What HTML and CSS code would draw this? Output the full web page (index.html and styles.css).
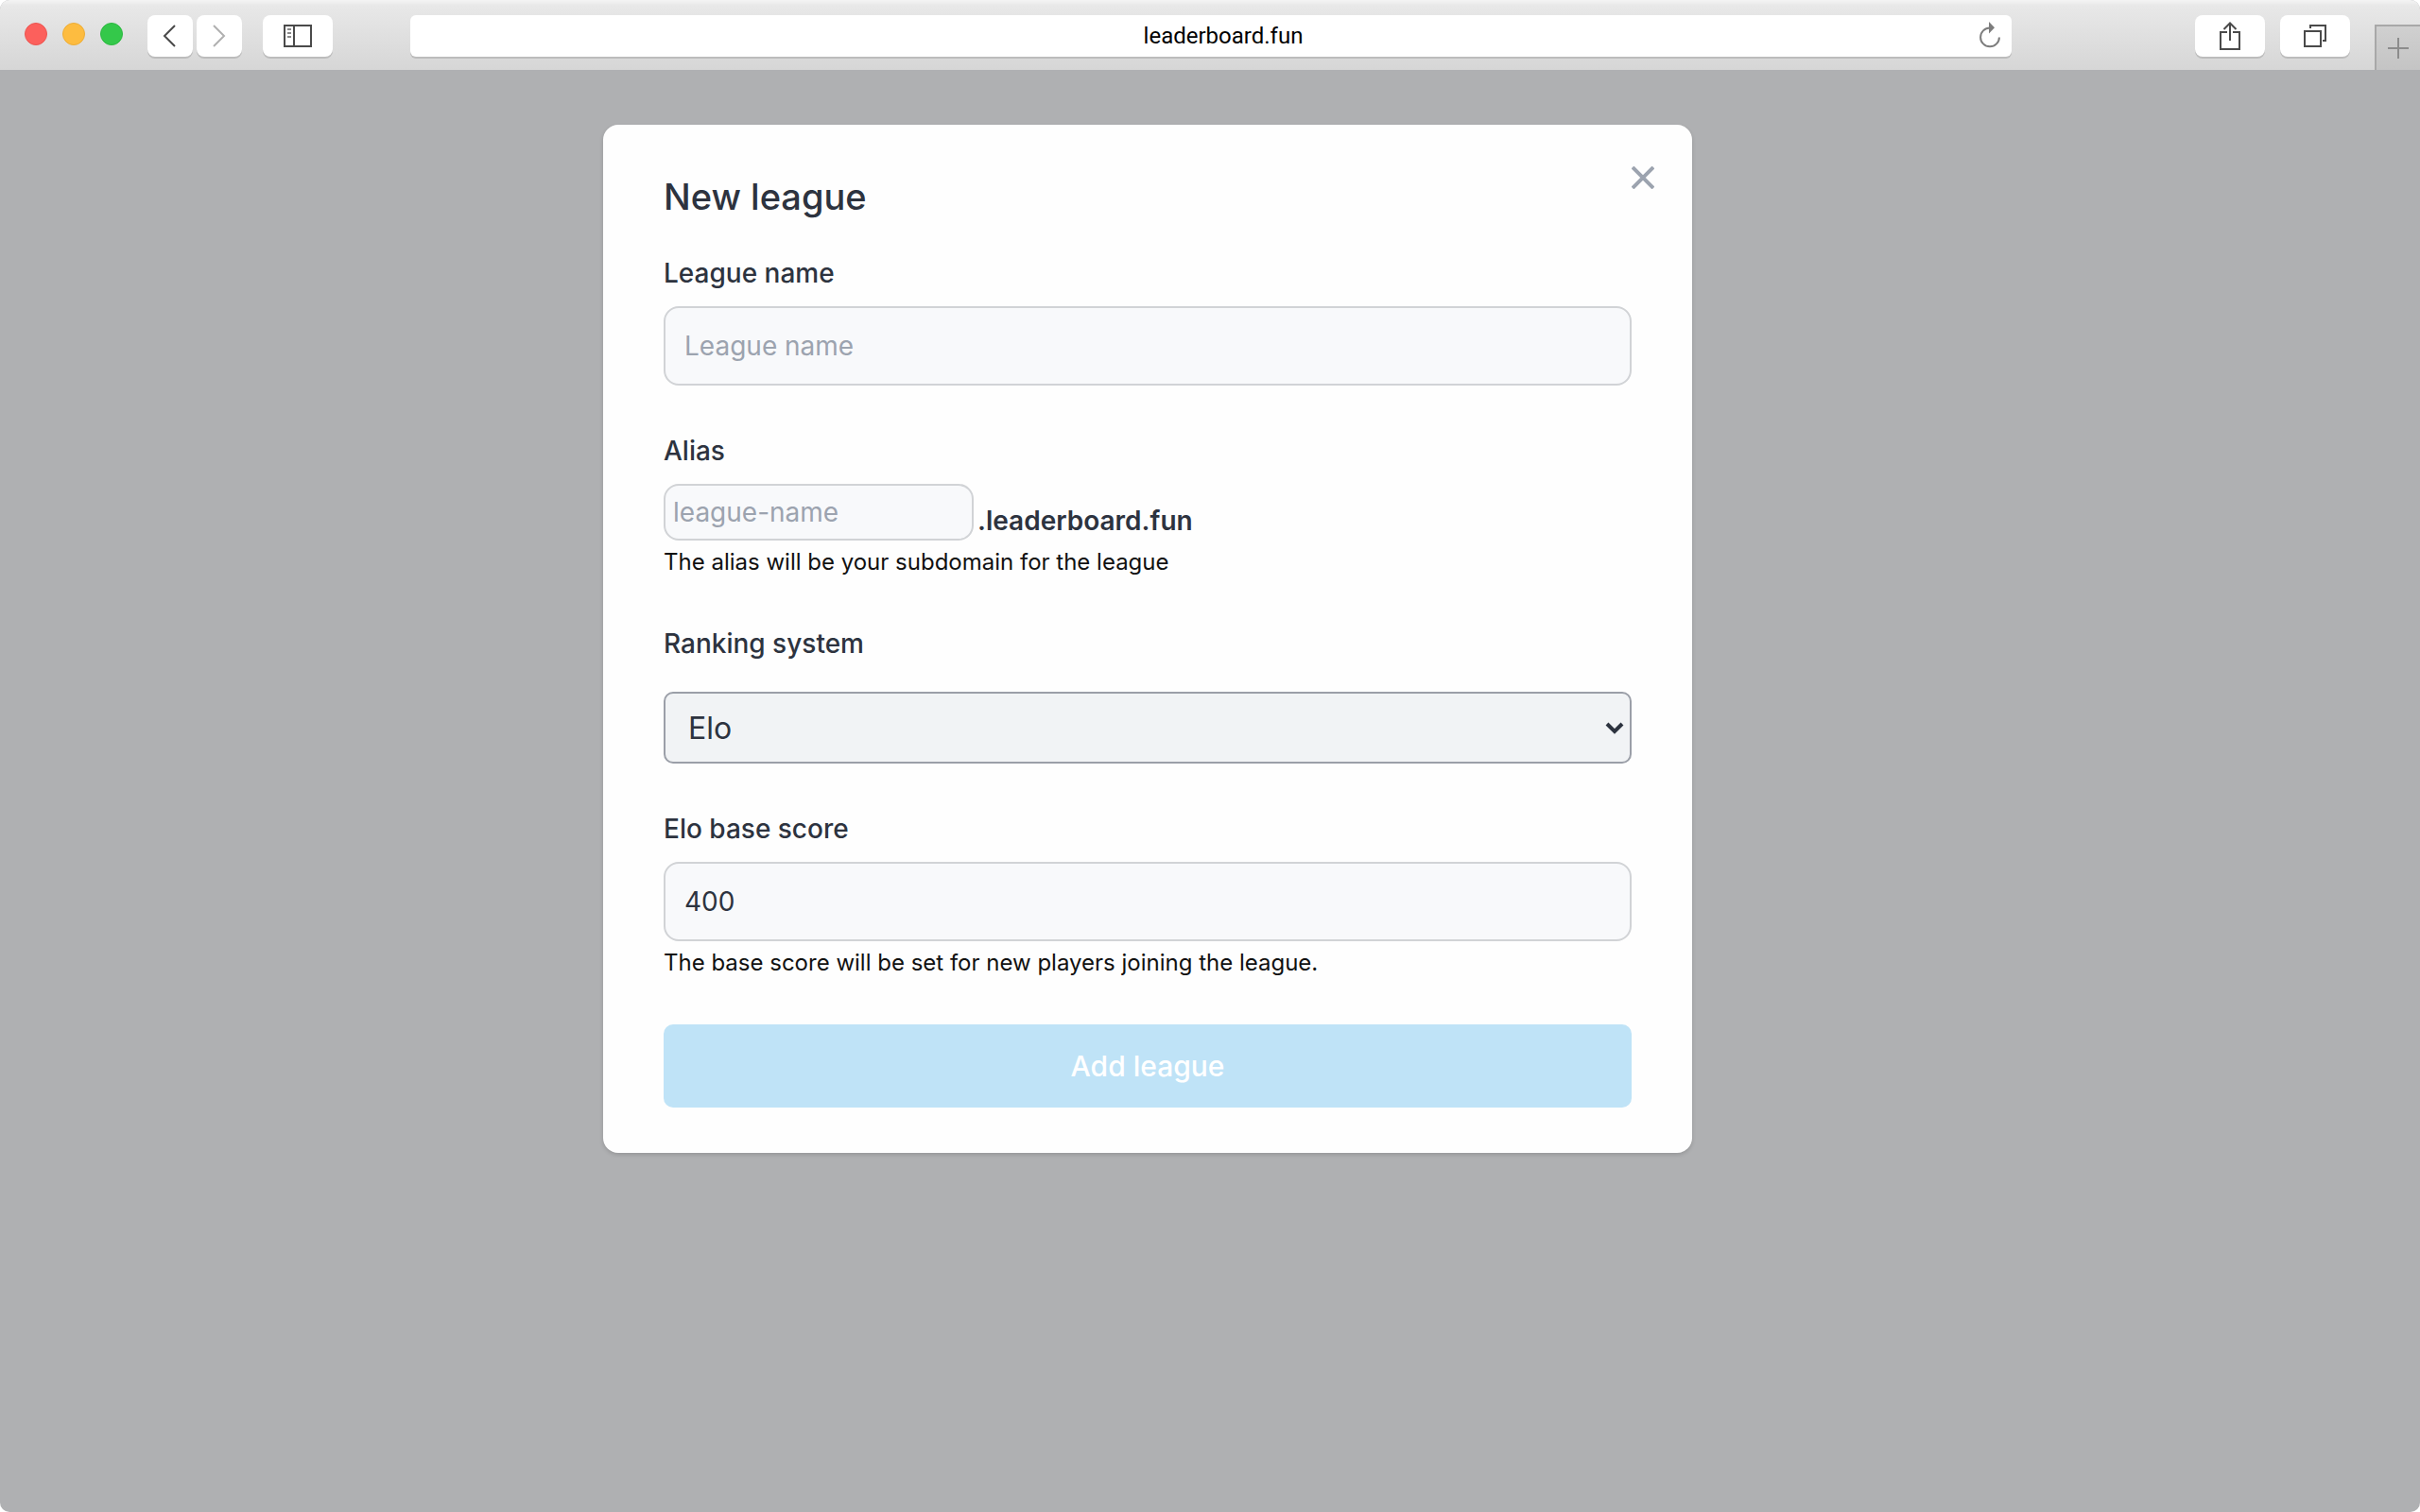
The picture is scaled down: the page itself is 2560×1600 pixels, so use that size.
FILE: index.html
```html
<!DOCTYPE html>
<html lang="en">
<head>
    <meta charset="UTF-8">
    <meta name="viewport" content="width=device-width, initial-scale=1.0">
    <title>New league</title>
    <link rel="stylesheet" href="styles.css">
</head>
<body>

<div class="window">
    <header class="toolbar">
        <div class="lights">
            <span class="light red"></span>
            <span class="light yellow"></span>
            <span class="light green"></span>
        </div>
        <div class="nav">
            <button class="tool small" aria-label="Back">
                <svg width="16" height="24" viewBox="0 0 16 24" fill="none" stroke="#4a4a4a" stroke-width="2"><path d="M13 1 2 12l11 11"/></svg>
            </button>
            <button class="tool small" aria-label="Forward">
                <svg width="14" height="24" viewBox="0 0 14 24" fill="none" stroke="#b0b0b0" stroke-width="2"><path d="m1 1 11 11L1 23"/></svg>
            </button>
        </div>
        <button class="tool" aria-label="Sidebar">
            <svg width="30" height="24" viewBox="0 0 30 24" fill="none" stroke="#4a4a4a" stroke-width="2"><path d="M1 1h28v22H1zM11 1v22"/><path stroke="#8a8a8a" d="M4 5h4M4 9h4M4 13h4"/></svg>
        </button>
        <div class="address">
            <input class="url" type="text" value="leaderboard.fun" aria-label="Address">
            <button class="reload" aria-label="Reload">
                <svg width="22" height="28" viewBox="0 0 22 28"><path d="M11 6.500a9.900 9.900 0 1 0 9.900 9.900" fill="none" stroke="#7d7d7d" stroke-width="2"/><path d="M10 0v12.500l6-6.200z" fill="#7d7d7d"/></svg>
            </button>
        </div>
        <div class="actions">
            <button class="tool" aria-label="Share">
                <svg width="22" height="30" viewBox="0 0 22 30" fill="none" stroke="#4a4a4a" stroke-width="2"><path d="M8 11H1v18h20V11h-7M11 20V1.500M4.500 8 11 1.500 17.500 8"/></svg>
            </button>
            <button class="tool" aria-label="Tabs">
                <svg width="24" height="24" viewBox="0 0 24 24" fill="none" stroke="#4a4a4a" stroke-width="2"><path d="M1 7h17v16H1zM7 4V1h16v16h-3"/></svg>
            </button>
        </div>
        <button class="new-tab" aria-label="New tab">
            <svg width="22" height="22" viewBox="0 0 22 22" fill="none" stroke="#8c8c8c" stroke-width="2"><path d="M11 0v22M0 11h22"/></svg>
        </button>
    </header>

    <main class="overlay">
        <form class="modal">
            <button type="button" class="close" aria-label="Close">
                <svg width="24" height="24" viewBox="0 0 24 24" fill="none" stroke="#9ca3af" stroke-width="4"><path d="m1 1 22 22M23 1 1 23"/></svg>
            </button>
            <h1 class="title">New league</h1>

            <div class="field">
                <label for="name">League name</label>
                <input type="text" id="name" class="input" placeholder="League name">
            </div>

            <div class="field">
                <label for="alias">Alias</label>
                <div class="alias-row">
                    <input type="text" id="alias" class="input alias" placeholder="league-name">
                    <span class="domain">.leaderboard.fun</span>
                </div>
                <p class="help">The alias will be your subdomain for the league</p>
            </div>

            <div class="field ranking">
                <label for="ranking">Ranking system</label>
                <div class="select-wrap">
                    <select id="ranking" class="select">
                        <option>Elo</option>
                    </select>
                    <svg class="arrow" width="20" height="14" viewBox="0 0 20 14" fill="none" stroke="#2d333f" stroke-width="4"><path d="m2 2 8 8 8-8"/></svg>
                </div>
            </div>

            <div class="field">
                <label for="score">Elo base score</label>
                <input type="text" id="score" class="input" value="400">
                <p class="help">The base score will be set for new players joining the league.</p>
            </div>

            <button type="submit" class="submit" disabled>Add league</button>
        </form>
    </main>
</div>

</body>
</html>
```
FILE: styles.css
```css
* {
    box-sizing: border-box;
}
body {
    margin: 0;
    background-color: #fff;
    font-family: Inter, "Liberation Sans", sans-serif;
    color: #2d333f;
}
button {
    border: 0;
    padding: 0;
    cursor: pointer;
}
.window {
    display: flex;
    flex-direction: column;
    min-height: 100vh;
    border-radius: 10px;
    background-color: #afb0b2;
    overflow: hidden;
}

/* browser bar */
.toolbar {
    display: flex;
    align-items: flex-start;
    height: 74px;
    padding: 16px 0 0 26px;
    background: linear-gradient(#f4f4f4, #e8e8e8 6px, #d6d6d6);
}
.lights {
    display: flex;
    gap: 16px;
    padding-top: 8px;
    margin-right: 26px;
}
.light {
    width: 24px;
    height: 24px;
    border-radius: 50%;
}
.red {
    background-color: #fc605c;
    border: 1px solid #ec5550;
}
.yellow {
    background-color: #fdbc40;
    border: 1px solid #edad36;
}
.green {
    background-color: #34c84a;
    border: 1px solid #2cb940;
}
.nav {
    display: flex;
    gap: 4px;
    margin-right: 22px;
}
.tool {
    display: flex;
    align-items: center;
    justify-content: center;
    width: 74px;
    height: 44px;
    border-radius: 8px;
    background-color: #fff;
    box-shadow: 0 2px 0 #bcbcbc;
}
.small {
    width: 48px;
}
.address {
    display: flex;
    flex: 1;
    height: 44px;
    margin: 0 194px 0 82px;
    border-radius: 6px;
    background-color: #fff;
    box-shadow: 0 2px 0 #bcbcbc;
}
.url {
    flex: 1;
    min-width: 0;
    padding: 0 0 0 72px;
    border: 0;
    background: none;
    font-family: Roboto, sans-serif;
    font-size: 24px;
    text-align: center;
    color: #000;
}
.reload {
    width: 46px;
    background: none;
}
.actions {
    display: flex;
    gap: 16px;
    margin-right: 26px;
}
.new-tab {
    display: flex;
    align-items: center;
    justify-content: center;
    align-self: flex-end;
    width: 48px;
    height: 48px;
    border-top: 2px solid #a8a8a8;
    border-left: 2px solid #a8a8a8;
    background: linear-gradient(#d0d0d0, #c4c4c4);
}

/* modal */
.overlay {
    display: flex;
    flex: 1;
    align-items: flex-start;
    justify-content: center;
    padding: 58px 132px 58px 0;
}
.modal {
    position: relative;
    width: 100%;
    max-width: 1152px;
    padding: 48px 64px;
    border-radius: 16px;
    background-color: #fefefe;
    box-shadow: 0 2px 4px rgba(0, 0, 0, 0.15);
}
.close {
    position: absolute;
    top: 32px;
    right: 28px;
    display: flex;
    align-items: center;
    justify-content: center;
    width: 48px;
    height: 48px;
    background: none;
}
.title {
    margin: 0 0 32px;
    font-size: 38px;
    font-weight: 500;
    line-height: 56px;
}
.field {
    display: flex;
    flex-direction: column;
    gap: 14px;
    margin-bottom: 48px;
}
.field label,
.domain {
    font-size: 28px;
    font-weight: 500;
    line-height: 42px;
}
.field .domain {
    font-weight: 600;
}
.input {
    width: 100%;
    height: 84px;
    padding: 0 20px;
    border: 2px solid #d1d3d6;
    border-radius: 16px;
    background-color: #f8f9fb;
    font-family: inherit;
    font-size: 28px;
    color: inherit;
}
.input::placeholder {
    color: #9ca3af;
}
.alias-row {
    display: flex;
    align-items: flex-end;
    gap: 4px;
}
.alias {
    width: 328px;
    height: 60px;
    padding: 0 8px;
}
.help {
    margin: -8px 0 0;
    font-size: 24px;
    line-height: 34px;
    color: #111;
}
.ranking {
    gap: 30px;
}
.select-wrap {
    position: relative;
}
.select {
    display: block;
    width: 100%;
    height: 76px;
    padding: 0 24px;
    border: 2px solid #9b9fa8;
    border-radius: 10px;
    background-color: #f1f3f5;
    appearance: none;
    font-family: inherit;
    font-size: 32px;
    color: inherit;
}
.arrow {
    position: absolute;
    top: 32px;
    right: 8px;
    pointer-events: none;
}
.submit {
    display: block;
    width: 100%;
    height: 88px;
    border-radius: 10px;
    background-color: #bfe3f7;
    font-family: inherit;
    font-size: 30px;
    font-weight: 500;
    color: #fff;
}
```
